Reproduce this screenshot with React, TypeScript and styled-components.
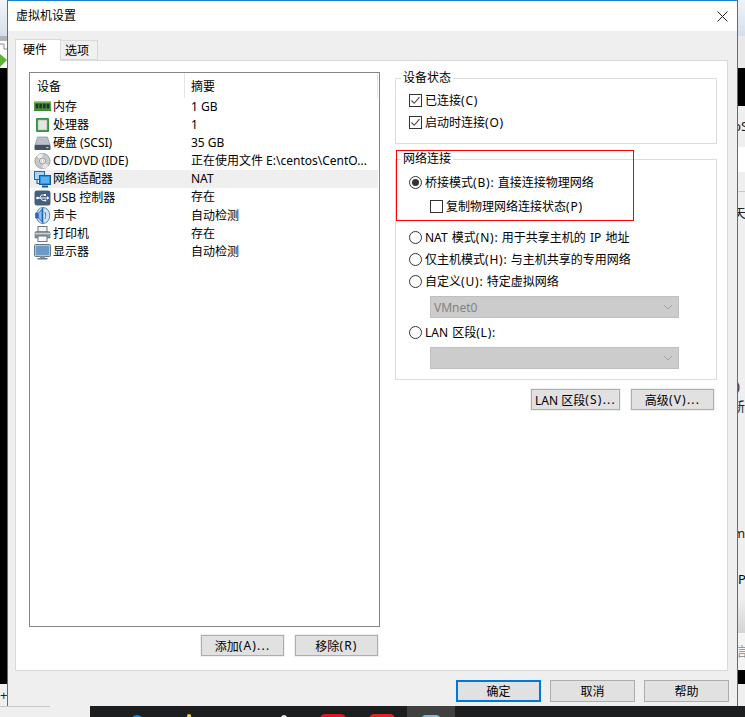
import React from 'react';
import styled, { createGlobalStyle } from 'styled-components';

const GlobalStyle = createGlobalStyle`
  html, body {
    margin: 0;
    padding: 0;
    background: #efefef;
  }
  body {
    font-family: "Noto Sans", "Noto Sans CJK SC", sans-serif;
    font-size: 12px;
    color: #000;
  }
`;

const Page = styled.div`
  position: relative;
  width: 745px;
  height: 717px;
  overflow: hidden;
  display: grid;
  grid-template-columns: 7px 731px 7px;
  grid-template-rows: 706px 11px;
`;

const Strip = styled.div`
  display: flex;
  flex-direction: column;
  overflow: hidden;
`;

const Segment = styled.div<{ $h: number; $bg: string; $indent?: number; $color?: string }>`
  flex: none;
  height: ${p => p.$h}px;
  background: ${p => p.$bg};
  color: ${p => p.$color || '#222'};
  font-size: 13px;
  line-height: ${p => p.$h}px;
  white-space: nowrap;
  overflow: hidden;
  text-indent: ${p => p.$indent || 0}px;
`;

const Dialog = styled.div`
  border: 1px solid #1b7fd0;
  border-bottom: none;
  display: flex;
  flex-direction: column;
  background: #efefef;
`;

const TitleBar = styled.div`
  flex: none;
  height: 30px;
  background: #fff;
  display: flex;
  align-items: center;
  justify-content: space-between;
  padding: 0 9px 0 8px;
  line-height: 30px;
`;

const Client = styled.div`
  flex: 1;
  display: flex;
  flex-direction: column;
  padding: 7px 9px 0 7px;
`;

const TabRow = styled.div`
  display: flex;
  height: 22px;
  align-items: flex-end;
  position: relative;
  z-index: 1;
`;

const Tab = styled.div<{ $active?: boolean }>`
  box-sizing: border-box;
  height: ${p => (p.$active ? 22 : 20)}px;
  width: ${p => (p.$active ? 46 : 38)}px;
  margin-bottom: ${p => (p.$active ? -1 : 0)}px;
  padding-left: ${p => (p.$active ? 7 : 4)}px;
  background: ${p => (p.$active ? '#fff' : '#f0f0f0')};
  border: 1px solid #d9d9d9;
  border-bottom: ${p => (p.$active ? 'none' : '1px solid #d9d9d9')};
  margin-left: ${p => (p.$active ? 0 : -1)}px;
  line-height: ${p => (p.$active ? 20 : 19)}px;
`;

const TabPanel = styled.div`
  box-sizing: border-box;
  width: 713px;
  height: 611px;
  background: #fff;
  border: 1px solid #d9d9d9;
  padding: 11px 0 0 13px;
  display: flex;
  gap: 15px;
`;

const LeftColumn = styled.div`
  width: 351px;
  display: flex;
  flex-direction: column;
`;

const DeviceList = styled.div`
  box-sizing: border-box;
  height: 555px;
  border: 1px solid #85858c;
`;

const ListHead = styled.div`
  height: 24.5px;
  display: grid;
  grid-template-columns: 155px 193px;
`;

const HeadCell = styled.div`
  box-sizing: border-box;
  height: 25px;
  line-height: 27px;
  padding-left: 7px;
  border-right: 1px solid #e5e5e5;

  & + & {
    padding-left: 6px;
  }
`;

const DeviceRow = styled.div<{ $selected?: boolean }>`
  height: 18.2px;
  width: 348px;
  display: grid;
  grid-template-columns: 154px 194px;
  background: ${p => (p.$selected ? '#efefef' : 'transparent')};
  line-height: 18px;
`;

const DeviceName = styled.div`
  display: flex;
  align-items: center;
  gap: 2px;
  padding-left: 4px;
  white-space: nowrap;
`;

const DeviceSummary = styled.div`
  padding-left: 7px;
  white-space: nowrap;
`;

const ButtonRow = styled.div<{ $right: number; $top: number }>`
  display: flex;
  justify-content: flex-end;
  gap: 9px;
  margin-top: ${p => p.$top}px;
  padding-right: ${p => p.$right}px;
`;

const Button = styled.div<{ $w: number; $primary?: boolean; $halo?: boolean }>`
  box-sizing: border-box;
  width: ${p => p.$w - (p.$halo ? 2 : 0)}px;
  height: ${p => (p.$halo ? 21 : 22)}px;
  margin: ${p => (p.$halo ? '1px' : '0')};
  background: #e1e1e1;
  border: ${p => (p.$primary ? '2px solid #0078d7' : '1px solid #adadad')};
  box-shadow: ${p => (p.$halo ? '0 0 0 1px #f0f0f0' : 'none')};
  display: flex;
  align-items: center;
  justify-content: center;
  white-space: pre;
`;

const Hotkey = styled.span<{ $wide?: boolean }>`
  letter-spacing: ${p => (p.$wide ? 1.2 : 0.8)}px;
`;

const RightColumn = styled.div`
  width: 322px;
  margin-top: -2px;
  display: flex;
  flex-direction: column;
`;

const Group = styled.fieldset<{ $top: number }>`
  box-sizing: border-box;
  margin: ${p => p.$top}px 0 0 0;
  padding: 0 0 10px 13px;
  min-width: 0;
  border: 1px solid #dcdcdc;
`;

const GroupTitle = styled.legend`
  margin-left: -8px;
  padding: 0 2px;
  line-height: 16px;
  font-size: 12px;
`;

const Option = styled.div<{ $top?: number; $indent?: number }>`
  height: 22px;
  display: flex;
  align-items: center;
  gap: 3px;
  margin-top: ${p => p.$top || 0}px;
  margin-left: ${p => p.$indent || 0}px;
  white-space: pre;
  word-spacing: 1px;
`;

const CheckBox = styled.span`
  box-sizing: border-box;
  flex: none;
  width: 13px;
  height: 13px;
  border: 1px solid #333;
  background: #fff;
  display: flex;
  align-items: center;
  justify-content: center;
`;

const Radio = styled.span<{ $on?: boolean }>`
  box-sizing: border-box;
  flex: none;
  width: 13px;
  height: 13px;
  border-radius: 50%;
  border: 1px solid #333;
  background: #fff;
  display: flex;
  align-items: center;
  justify-content: center;

  &::after {
    content: '';
    display: ${p => (p.$on ? 'block' : 'none')};
    width: 7px;
    height: 7px;
    border-radius: 50%;
    background: #333;
  }
`;

const Select = styled.div<{ $top: number }>`
  box-sizing: border-box;
  width: 249px;
  height: 22px;
  margin: ${p => p.$top}px 0 0 21px;
  padding: 0 5px 0 3px;
  background: #ccc;
  border: 1px solid #bfbfbf;
  color: #838383;
  display: flex;
  align-items: center;
  justify-content: space-between;
`;

const Footer = styled.div`
  display: flex;
  justify-content: flex-end;
  gap: 9px;
  margin-top: 9px;
  width: 714px;
`;

const RedFrame = styled.div`
  position: absolute;
  left: 396px;
  top: 150px;
  width: 236px;
  height: 69px;
  border: 1px solid #f00;
`;

const BottomBar = styled.div`
  grid-column: 1 / 4;
  display: flex;
  background: #efefef;
`;

const LightPart = styled.div`
  flex: none;
  width: 90px;
  box-sizing: border-box;
  background: linear-gradient(to right, #c8c8c8 50px, #efefef 50px) top / 100% 1px no-repeat;
`;

const Taskbar = styled.div`
  flex: 1;
  display: flex;
  background: #1c1e1f;
  height: 11px;
  overflow: hidden;
`;

const Peek = styled.span<{ $left: number; $w: number; $top: number; $bg: string; $round?: number }>`
  flex: none;
  margin-left: ${p => p.$left}px;
  margin-top: ${p => p.$top}px;
  width: ${p => p.$w}px;
  height: 12px;
  background: ${p => p.$bg};
  border-radius: ${p => p.$round ?? 5}px ${p => p.$round ?? 5}px 0 0;
`;

const ActiveTask = styled.span`
  flex: none;
  margin-left: 12px;
  width: 48px;
  background: #404040;
  display: flex;
  justify-content: center;
`;

const MemoryIcon = () => (
  <svg width="17" height="16" viewBox="0 0 17 16">
    <rect x="0" y="2.5" width="17" height="9" fill="#4fa83f" />
    <rect x="0" y="2.5" width="17" height="1" fill="#86d063" />
    <rect x="1.5" y="4.5" width="3" height="5" fill="#26322a" />
    <rect x="5.3" y="4.5" width="2.8" height="5" fill="#26322a" />
    <rect x="8.9" y="4.5" width="2.8" height="5" fill="#26322a" />
    <rect x="12.5" y="4.5" width="3" height="5" fill="#26322a" />
    <rect x="0" y="10.5" width="17" height="1.5" fill="#358a2e" />
  </svg>
);

const ProcessorIcon = () => (
  <svg width="17" height="16" viewBox="0 0 17 16">
    <rect x="2" y="1" width="13" height="14" rx="1" fill="#2f9445" />
    <rect x="4" y="3" width="9" height="10" fill="#e4e6e2" stroke="#a6b0a2" strokeWidth="0.6" />
  </svg>
);

const DiskIcon = () => (
  <svg width="17" height="16" viewBox="0 0 17 16">
    <path d="M3.5 2 H13.5 L16 10 H1 Z" fill="#b9c2cb" stroke="#76818c" strokeWidth="0.6" />
    <rect x="0.5" y="10" width="16" height="5" rx="1" fill="#46535f" />
    <rect x="12" y="12" width="2.5" height="1.2" fill="#9ed36a" />
  </svg>
);

const DiscIcon = () => (
  <svg width="17" height="16" viewBox="0 0 17 16">
    <circle cx="8.5" cy="8" r="7.6" fill="#c6c8ca" stroke="#8e9194" strokeWidth="0.8" />
    <path d="M8.5 8 L2.5 3 A7.6 7.6 0 0 1 8.5 .4 Z" fill="#eceded" />
    <path d="M8.5 8 L14.5 13 A7.6 7.6 0 0 1 8.5 15.6 Z" fill="#e6e7e8" />
    <circle cx="8.5" cy="8" r="3" fill="#efefef" stroke="#85888b" strokeWidth="0.8" />
    <circle cx="8.5" cy="8" r="1.2" fill="#fff" stroke="#a5a7a9" strokeWidth="0.5" />
  </svg>
);

const NetworkIcon = () => (
  <svg width="17" height="17" viewBox="0 0 17 17">
    <rect x="0.5" y="0.5" width="10" height="8" fill="#a9d4f2" stroke="#1f6fb0" />
    <path d="M3 9 V12.5 H8" fill="none" stroke="#1f6fb0" strokeWidth="1.2" />
    <rect x="5.5" y="4.5" width="11" height="9" fill="#2f8fdc" stroke="#135a99" />
    <rect x="7" y="6" width="8" height="6" fill="#57b2f0" />
    <rect x="8" y="14.5" width="6" height="2" fill="#135a99" />
  </svg>
);

const UsbIcon = () => (
  <svg width="17" height="16" viewBox="0 0 17 16">
    <rect x="0.5" y="0.5" width="16" height="15" rx="2.5" fill="#44607f" />
    <path d="M3 8 H13.5" stroke="#fff" strokeWidth="1" fill="none" />
    <path d="M5.5 8 L7.5 5 H10 M6.5 8 L8.5 10.5 H10.5" stroke="#fff" strokeWidth="0.9" fill="none" />
    <circle cx="3.5" cy="8" r="1.3" fill="#fff" />
    <path d="M13 6.3 L15.5 8 L13 9.7 Z" fill="#fff" />
    <rect x="10" y="4" width="2" height="2" fill="#fff" />
    <circle cx="11.3" cy="10.5" r="1.1" fill="#fff" />
  </svg>
);

const SoundIcon = () => (
  <svg width="17" height="17" viewBox="0 0 17 17">
    <ellipse cx="9" cy="8.5" rx="6.8" ry="8" fill="#cfe3f6" stroke="#4a86c5" strokeWidth="1" />
    <path d="M1.5 6 H4.5 L9 1 V16 L4.5 11 H1.5 Z" fill="#2a6cb5" stroke="#174a86" strokeWidth="0.5" />
    <path d="M4.8 6.2 L7.6 3.2 V13.8 L4.8 10.8 Z" fill="#8dbdea" />
    <path d="M11 5 Q12.6 8.5 11 12" stroke="#3f7fc2" strokeWidth="1.1" fill="none" />
  </svg>
);

const PrinterIcon = () => (
  <svg width="17" height="16" viewBox="0 0 17 16">
    <rect x="4" y="0.5" width="9" height="6" fill="#f2f2f2" stroke="#6d7680" />
    <path d="M1 7 Q1 5.5 2.5 5.5 H14.5 Q16 5.5 16 7 V12 H1 Z" fill="#8b95a0" stroke="#5a636d" strokeWidth="0.6" />
    <rect x="1" y="7" width="15" height="1.2" fill="#cdd3d9" />
    <rect x="4" y="10" width="9" height="5.5" fill="#fafafa" stroke="#6d7680" />
    <rect x="13.3" y="8.6" width="1.5" height="1" fill="#44ee55" />
  </svg>
);

const MonitorIcon = () => (
  <svg width="17" height="16" viewBox="0 0 17 16">
    <rect x="0.5" y="0.5" width="16" height="12" rx="1" fill="#b9c6d2" stroke="#66788a" />
    <rect x="2" y="2" width="13" height="9" fill="#6d9ac5" />
    <rect x="6" y="12.5" width="5" height="1.5" fill="#8b99a6" />
    <rect x="3.5" y="14" width="10" height="1.5" fill="#66788a" />
  </svg>
);

const CheckMark = () => (
  <svg width="11" height="11" viewBox="0 0 11 11">
    <path d="M1.5 5.5 L4.2 8.3 L9.5 2.2" fill="none" stroke="#444" strokeWidth="1.1" />
  </svg>
);

const Chevron = () => (
  <svg width="10" height="6" viewBox="0 0 10 6">
    <path d="M1 1 L5 5 L9 1" fill="none" stroke="#a2a2a2" strokeWidth="1" />
  </svg>
);

const CloseGlyph = () => (
  <svg width="11" height="11" viewBox="0 0 11 11">
    <path d="M.5 .5 L10.5 10.5 M10.5 .5 L.5 10.5" stroke="#222" strokeWidth="1" fill="none" />
  </svg>
);

const devices = [
  { icon: <MemoryIcon />, name: '内存', summary: '1 GB' },
  { icon: <ProcessorIcon />, name: '处理器', summary: '1' },
  { icon: <DiskIcon />, name: '硬盘 (SCSI)', summary: '35 GB' },
  { icon: <DiscIcon />, name: 'CD/DVD (IDE)', summary: '正在使用文件 E:\\centos\\CentO...' },
  { icon: <NetworkIcon />, name: '网络适配器', summary: 'NAT', selected: true },
  { icon: <UsbIcon />, name: 'USB 控制器', summary: '存在' },
  { icon: <SoundIcon />, name: '声卡', summary: '自动检测' },
  { icon: <PrinterIcon />, name: '打印机', summary: '存在' },
  { icon: <MonitorIcon />, name: '显示器', summary: '自动检测' },
];

export default function App() {
  return (
    <Page>
      <GlobalStyle />
      <Strip>
        <Segment $h={36} $bg="linear-gradient(#f2f5f9, #d5dfeb)" />
        <Segment $h={5} $bg="#b4b4b4" />
        <Segment $h={27} $bg="#fff">
          <svg width="7" height="27" viewBox="0 0 7 27">
            <path d="M-2 3 H4 V8 H7" fill="none" stroke="#8a8a8a" />
            <path d="M0 13 L7 19 L0 26 Z" fill="#5cb531" />
          </svg>
        </Segment>
        <Segment $h={616} $bg="#000" />
        <Segment $h={22} $bg="#f0f0f0">+</Segment>
      </Strip>

      <Dialog>
        <TitleBar>
          <span>虚拟机设置</span>
          <CloseGlyph />
        </TitleBar>
        <Client>
          <TabRow>
            <Tab $active>硬件</Tab>
            <Tab>选项</Tab>
          </TabRow>
          <TabPanel>
            <LeftColumn>
              <DeviceList>
                <ListHead>
                  <HeadCell>设备</HeadCell>
                  <HeadCell>摘要</HeadCell>
                </ListHead>
                {devices.map(d => (
                  <DeviceRow key={d.name} $selected={d.selected}>
                    <DeviceName>{d.icon}{d.name}</DeviceName>
                    <DeviceSummary>{d.summary}</DeviceSummary>
                  </DeviceRow>
                ))}
              </DeviceList>
              <ButtonRow $right={1} $top={7}>
                <Button $w={85} $halo>添加<Hotkey $wide>(A)...</Hotkey></Button>
                <Button $w={85} $halo>移除<Hotkey $wide>(R)</Hotkey></Button>
              </ButtonRow>
            </LeftColumn>
            <RightColumn>
              <Group $top={0}>
                <GroupTitle>设备状态</GroupTitle>
                <Option $top={3}><CheckBox><CheckMark /></CheckBox><span>已连接<Hotkey>(C)</Hotkey></span></Option>
                <Option><CheckBox><CheckMark /></CheckBox><span>启动时连接<Hotkey>(O)</Hotkey></span></Option>
              </Group>
              <Group $top={7}>
                <GroupTitle>网络连接</GroupTitle>
                <Option $top={4}><Radio $on /><span>桥接模式<Hotkey>(B)</Hotkey>: 直接连接物理网络</span></Option>
                <Option $top={2} $indent={21}><CheckBox /><span>复制物理网络连接状态<Hotkey>(P)</Hotkey></span></Option>
                <Option $top={9}><Radio /><span>NAT 模式<Hotkey>(N)</Hotkey>: 用于共享主机的 IP 地址</span></Option>
                <Option><Radio /><span>仅主机模式<Hotkey>(H)</Hotkey>: 与主机共享的专用网络</span></Option>
                <Option><Radio /><span>自定义<Hotkey>(U)</Hotkey>: 特定虚拟网络</span></Option>
                <Select $top={4}>VMnet0<Chevron /></Select>
                <Option $top={3}><Radio /><span>LAN 区段<Hotkey>(L)</Hotkey>:</span></Option>
                <Select $top={4}><span /><Chevron /></Select>
              </Group>
              <ButtonRow $right={2} $top={8}>
                <Button $w={91} $halo>LAN 区段<Hotkey $wide>(S)...</Hotkey></Button>
                <Button $w={85} $halo>高级<Hotkey $wide>(V)...</Hotkey></Button>
              </ButtonRow>
            </RightColumn>
          </TabPanel>
          <Footer>
            <Button $w={85} $primary>确定</Button>
            <Button $w={85}>取消</Button>
            <Button $w={85}>帮助</Button>
          </Footer>
        </Client>
      </Dialog>

      <Strip>
        <Segment $h={36} $bg="linear-gradient(#eef3f8, #d5dfeb)" />
        <Segment $h={32} $bg="#e9e9e9" />
        <Segment $h={38} $bg="#000" />
        <Segment $h={41} $bg="#efefef" $indent={-5}>pS</Segment>
        <Segment $h={25} $bg="#fff" />
        <Segment $h={20} $bg="linear-gradient(#efefef 19px, #c8c8c8 19px)" />
        <Segment $h={40} $bg="#efefef" $indent={-5}>矢</Segment>
        <Segment $h={144} $bg="#efefef" />
        <Segment $h={20} $bg="#efefef" $indent={-2}>)</Segment>
        <Segment $h={20} $bg="#efefef" $indent={-6}>新</Segment>
        <Segment $h={107} $bg="#efefef" />
        <Segment $h={20} $bg="#efefef" $indent={-5}>m</Segment>
        <Segment $h={28} $bg="#efefef" />
        <Segment $h={16} $bg="#efefef" $color="#000">Pe</Segment>
        <Segment $h={10} $bg="#efefef" />
        <Segment $h={36} $bg="linear-gradient(#f0f0f0, #d4d4d4)" />
        <Segment $h={37} $bg="#f4f4f4" $color="#8a8a8a" $indent={-4}>信</Segment>
        <Segment $h={14} $bg="#000" />
        <Segment $h={22} $bg="#efefef" />
      </Strip>

      <BottomBar>
        <LightPart />
        <Taskbar>
          <Peek $left={40} $w={14} $top={9} $bg="#1683d8" $round={7} />
          <Peek $left={43} $w={4} $top={8} $bg="#f5d23c" $round={2} />
          <Peek $left={90} $w={6} $top={9} $bg="#e4e4e4" $round={3} />
          <Peek $left={33} $w={26} $top={8} $bg="#e0161e" />
          <Peek $left={23} $w={26} $top={8} $bg="#e0261e" />
          <ActiveTask>
            <Peek $left={0} $w={20} $top={9} $bg="#6cc3e0" />
          </ActiveTask>
        </Taskbar>
      </BottomBar>

      <RedFrame />
    </Page>
  );
}
